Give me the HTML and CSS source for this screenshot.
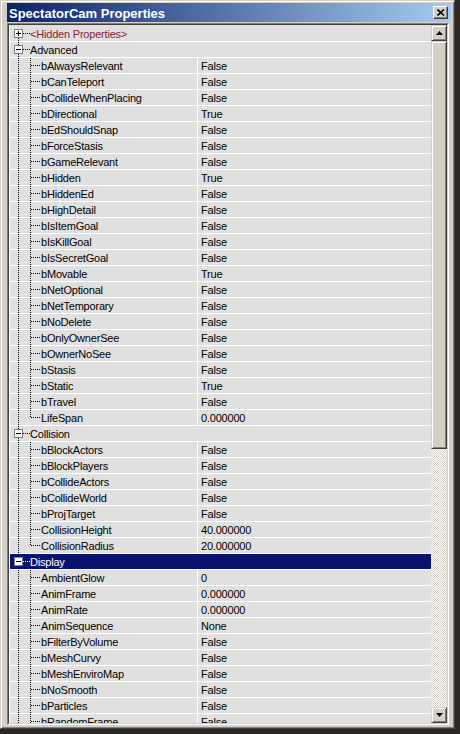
FILE: index.html
```html
<!DOCTYPE html>
<html>
<head>
<meta charset="utf-8">
<title>SpectatorCam Properties</title>
<link rel="stylesheet" href="styles.css">
</head>
<body>
<div class="window">
  <div class="titlebar">
    <div class="title">SpectatorCam Properties</div>
    <div class="close"><svg width="8" height="7" viewBox="0 0 8 7"><path d="M0.5 0.5L7 6.5M7 0.5L0.5 6.5" stroke="#000" stroke-width="1.6" fill="none"/></svg></div>
  </div>
  <div class="panel">
    <div class="panel-inner">
      <div class="list">
        <div class="row cat first"><div class="name"><svg class="exp" width="9" height="9" viewBox="0 0 9 9"><rect x="0.5" y="0.5" width="8" height="8" fill="#fff" stroke="#808080"/><path d="M2 4.5h5M4.5 2v5" stroke="#000"/></svg><span class="hidden">&lt;Hidden Properties&gt;</span></div></div>
        <div class="row cat"><div class="name"><svg class="exp" width="9" height="9" viewBox="0 0 9 9"><rect x="0.5" y="0.5" width="8" height="8" fill="#fff" stroke="#808080"/><path d="M2 4.5h5" stroke="#000"/></svg><span>Advanced</span></div></div>
        <div class="row child"><div class="name">bAlwaysRelevant</div><div class="val">False</div></div>
        <div class="row child"><div class="name">bCanTeleport</div><div class="val">False</div></div>
        <div class="row child"><div class="name">bCollideWhenPlacing</div><div class="val">False</div></div>
        <div class="row child"><div class="name">bDirectional</div><div class="val">True</div></div>
        <div class="row child"><div class="name">bEdShouldSnap</div><div class="val">False</div></div>
        <div class="row child"><div class="name">bForceStasis</div><div class="val">False</div></div>
        <div class="row child"><div class="name">bGameRelevant</div><div class="val">False</div></div>
        <div class="row child"><div class="name">bHidden</div><div class="val">True</div></div>
        <div class="row child"><div class="name">bHiddenEd</div><div class="val">False</div></div>
        <div class="row child"><div class="name">bHighDetail</div><div class="val">False</div></div>
        <div class="row child"><div class="name">bIsItemGoal</div><div class="val">False</div></div>
        <div class="row child"><div class="name">bIsKillGoal</div><div class="val">False</div></div>
        <div class="row child"><div class="name">bIsSecretGoal</div><div class="val">False</div></div>
        <div class="row child"><div class="name">bMovable</div><div class="val">True</div></div>
        <div class="row child"><div class="name">bNetOptional</div><div class="val">False</div></div>
        <div class="row child"><div class="name">bNetTemporary</div><div class="val">False</div></div>
        <div class="row child"><div class="name">bNoDelete</div><div class="val">False</div></div>
        <div class="row child"><div class="name">bOnlyOwnerSee</div><div class="val">False</div></div>
        <div class="row child"><div class="name">bOwnerNoSee</div><div class="val">False</div></div>
        <div class="row child"><div class="name">bStasis</div><div class="val">False</div></div>
        <div class="row child"><div class="name">bStatic</div><div class="val">True</div></div>
        <div class="row child"><div class="name">bTravel</div><div class="val">False</div></div>
        <div class="row child last"><div class="name">LifeSpan</div><div class="val">0.000000</div></div>
        <div class="row cat"><div class="name"><svg class="exp" width="9" height="9" viewBox="0 0 9 9"><rect x="0.5" y="0.5" width="8" height="8" fill="#fff" stroke="#808080"/><path d="M2 4.5h5" stroke="#000"/></svg><span>Collision</span></div></div>
        <div class="row child"><div class="name">bBlockActors</div><div class="val">False</div></div>
        <div class="row child"><div class="name">bBlockPlayers</div><div class="val">False</div></div>
        <div class="row child"><div class="name">bCollideActors</div><div class="val">False</div></div>
        <div class="row child"><div class="name">bCollideWorld</div><div class="val">False</div></div>
        <div class="row child"><div class="name">bProjTarget</div><div class="val">False</div></div>
        <div class="row child"><div class="name">CollisionHeight</div><div class="val">40.000000</div></div>
        <div class="row child last"><div class="name">CollisionRadius</div><div class="val">20.000000</div></div>
        <div class="row cat sel"><div class="name"><svg class="exp" width="9" height="9" viewBox="0 0 9 9"><rect x="0.5" y="0.5" width="8" height="8" fill="#fff" stroke="#808080"/><path d="M2 4.5h5" stroke="#000"/></svg><span>Display</span></div></div>
        <div class="row child"><div class="name">AmbientGlow</div><div class="val">0</div></div>
        <div class="row child"><div class="name">AnimFrame</div><div class="val">0.000000</div></div>
        <div class="row child"><div class="name">AnimRate</div><div class="val">0.000000</div></div>
        <div class="row child"><div class="name">AnimSequence</div><div class="val">None</div></div>
        <div class="row child"><div class="name">bFilterByVolume</div><div class="val">False</div></div>
        <div class="row child"><div class="name">bMeshCurvy</div><div class="val">False</div></div>
        <div class="row child"><div class="name">bMeshEnviroMap</div><div class="val">False</div></div>
        <div class="row child"><div class="name">bNoSmooth</div><div class="val">False</div></div>
        <div class="row child"><div class="name">bParticles</div><div class="val">False</div></div>
        <div class="row child"><div class="name">bRandomFrame</div><div class="val">False</div></div>
      </div>
      <div class="scrollbar">
        <div class="sbtn"><svg width="7" height="4" viewBox="0 0 7 4"><path d="M3.5 0L7 4H0Z" fill="#000"/></svg></div>
        <div class="thumb"></div>
        <div class="track"></div>
        <div class="sbtn"><svg width="7" height="4" viewBox="0 0 7 4"><path d="M0 0H7L3.5 4Z" fill="#000"/></svg></div>
      </div>
    </div>
  </div>
</div>
</body>
</html>
```

FILE: styles.css
```css
* { box-sizing: border-box; }
html, body { margin: 0; padding: 0; }
body {
  width: 460px;
  height: 734px;
  overflow: hidden;
  background: #2c2825;
  font-family: "Liberation Sans", Arial, sans-serif;
  font-size: 11px;
}
.window {
  width: 455px;
  height: 729px;
  background: #d4d0c8;
  border: 1px solid;
  border-color: #d4d0c8 #404040 #404040 #d4d0c8;
  box-shadow: inset 1px 1px #fff, inset -1px -1px #808080;
  padding: 2px 3px 3px 6px;
  display: flex;
  flex-direction: column;
}
.titlebar {
  height: 19px;
  flex: none;
  background: linear-gradient(to right, #0a246a, #a6caf0);
  display: flex;
  align-items: flex-start;
  padding: 0 3px 0 2px;
  margin-bottom: 1px;
}
.title {
  flex: 1;
  color: #fff;
  font-weight: bold;
  font-size: 13px;
  line-height: 19px;
  padding-top: 1px;
  white-space: nowrap;
}
.close {
  width: 15px;
  height: 13px;
  margin-top: 3px;
  background: #d4d0c8;
  border: 1px solid;
  border-color: #fff #404040 #404040 #fff;
  box-shadow: inset -1px -1px #808080;
  display: flex;
  align-items: center;
  justify-content: center;
}
.close svg { display: block; }
.panel {
  width: 442px;
  height: 702px;
  border: 1px solid;
  border-color: #808080 #fff #fff #808080;
}
.panel-inner {
  height: 100%;
  border: 1px solid;
  border-color: #404040 #d4d0c8 #d4d0c8 #404040;
  display: flex;
}
.list {
  flex: 1;
  overflow: hidden;
  background: #e0e0e0;
  border-left: 1px solid #fff;
  padding-top: 1px;
}
.row {
  display: flex;
  height: 16px;
  border-bottom: 1px solid #fff;
  line-height: 15px;
  white-space: nowrap;
  color: #000;
  letter-spacing: -0.2px;
}
.name {
  width: 187px;
  flex: none;
  display: flex;
  align-items: flex-start;
  overflow: hidden;
  padding-top: 1px;
}
.val {
  flex: 1;
  border-left: 1px solid #fff;
  padding-left: 3px;
  padding-top: 1px;
}
.exp { display: block; margin: 2px 7px 0 4px; flex: none; }
.hidden { color: #8b1c3c; }

.cat .name {
  flex: 1;
  width: auto;
  background-image:
    repeating-linear-gradient(to bottom, #000 0 1px, transparent 1px 2px),
    repeating-linear-gradient(to right, #000 0 1px, transparent 1px 2px);
  background-size: 1px 100%, 7px 1px;
  background-position: 8px 0, 13px 7px;
  background-repeat: no-repeat;
  background-origin: border-box;
}
.cat.first .name {
  background-size: 1px 3px, 7px 1px;
  background-position: 8px 12px, 13px 7px;
}
.child .name {
  padding-left: 31px;
  background-image:
    repeating-linear-gradient(to bottom, #000 0 1px, transparent 1px 2px),
    repeating-linear-gradient(to bottom, #000 0 1px, transparent 1px 2px),
    repeating-linear-gradient(to right, #000 0 1px, transparent 1px 2px);
  background-size: 1px 100%, 1px 100%, 10px 1px;
  background-position: 8px 0, 20px 0, 21px 7px;
  background-repeat: no-repeat;
  background-origin: border-box;
}
.child.last .name {
  background-size: 1px 100%, 1px 8px, 10px 1px;
}
.row.sel {
  background: #0a1470;
  color: #fff;
}
.row.sel .name {
  background-image:
    repeating-linear-gradient(to bottom, transparent 0 1px, transparent 1px 2px),
    repeating-linear-gradient(to right, #fff 0 1px, transparent 1px 2px);
}
.scrollbar {
  width: 16px;
  flex: none;
  display: flex;
  flex-direction: column;
}
.sbtn, .thumb {
  background: #d4d0c8;
  border: 1px solid;
  border-color: #d4d0c8 #404040 #404040 #d4d0c8;
  box-shadow: inset 1px 1px #fff, inset -1px -1px #808080;
}
.sbtn {
  height: 16px;
  flex: none;
  display: flex;
  align-items: center;
  justify-content: center;
}
.sbtn svg { display: block; }
.thumb { height: 408px; flex: none; }
.track {
  flex: 1;
  background-image: conic-gradient(#fff 25%, #d4d0c8 0 50%, #fff 0 75%, #d4d0c8 0);
  background-size: 2px 2px;
}
```
